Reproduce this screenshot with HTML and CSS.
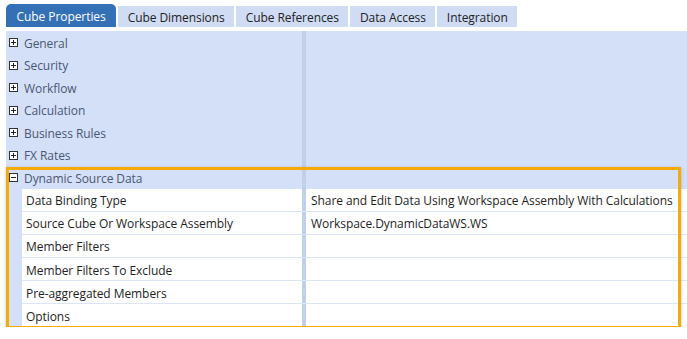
FILE: index.html
```html
<!DOCTYPE html>
<html>
<head>
<meta charset="utf-8">
<link rel="stylesheet" href="styles.css">
</head>
<body>
<div class="tabs">
  <div class="tab active">Cube Properties</div>
  <div class="tab">Cube Dimensions</div>
  <div class="tab">Cube References</div>
  <div class="tab">Data Access</div>
  <div class="tab">Integration</div>
</div>
<div class="panel">
  <div class="cat"><div class="cat-l"><svg class="ico" viewBox="0 0 9 9"><rect x="0.5" y="0.5" width="8" height="8" fill="#fff" stroke="#333"/><path d="M2 4.5h5M4.5 2v5" stroke="#222"/></svg><span>General</span></div><div class="cat-r"></div></div>
  <div class="cat"><div class="cat-l"><svg class="ico" viewBox="0 0 9 9"><rect x="0.5" y="0.5" width="8" height="8" fill="#fff" stroke="#333"/><path d="M2 4.5h5M4.5 2v5" stroke="#222"/></svg><span>Security</span></div><div class="cat-r"></div></div>
  <div class="cat"><div class="cat-l"><svg class="ico" viewBox="0 0 9 9"><rect x="0.5" y="0.5" width="8" height="8" fill="#fff" stroke="#333"/><path d="M2 4.5h5M4.5 2v5" stroke="#222"/></svg><span>Workflow</span></div><div class="cat-r"></div></div>
  <div class="cat"><div class="cat-l"><svg class="ico" viewBox="0 0 9 9"><rect x="0.5" y="0.5" width="8" height="8" fill="#fff" stroke="#333"/><path d="M2 4.5h5M4.5 2v5" stroke="#222"/></svg><span>Calculation</span></div><div class="cat-r"></div></div>
  <div class="cat"><div class="cat-l"><svg class="ico" viewBox="0 0 9 9"><rect x="0.5" y="0.5" width="8" height="8" fill="#fff" stroke="#333"/><path d="M2 4.5h5M4.5 2v5" stroke="#222"/></svg><span>Business Rules</span></div><div class="cat-r"></div></div>
  <div class="cat"><div class="cat-l"><svg class="ico" viewBox="0 0 9 9"><rect x="0.5" y="0.5" width="8" height="8" fill="#fff" stroke="#333"/><path d="M2 4.5h5M4.5 2v5" stroke="#222"/></svg><span>FX Rates</span></div><div class="cat-r"></div></div>
  <div class="group">
    <div class="cat"><div class="cat-l"><svg class="ico" viewBox="0 0 9 9"><rect x="0.5" y="0.5" width="8" height="8" fill="#fff" stroke="#333"/><path d="M2 4.5h5" stroke="#222"/></svg><span>Dynamic Source Data</span></div><div class="cat-r"></div></div>
    <div class="prop"><div class="pl">Data Binding Type</div><div class="pr">Share and Edit Data Using Workspace Assembly With Calculations</div></div>
    <div class="prop"><div class="pl">Source Cube Or Workspace Assembly</div><div class="pr">Workspace.DynamicDataWS.WS</div></div>
    <div class="prop"><div class="pl">Member Filters</div><div class="pr"></div></div>
    <div class="prop"><div class="pl">Member Filters To Exclude</div><div class="pr"></div></div>
    <div class="prop"><div class="pl">Pre-aggregated Members</div><div class="pr"></div></div>
    <div class="prop last"><div class="pl">Options</div><div class="pr"></div></div>
  </div>
</div>
</body>
</html>
```
FILE: styles.css
```css
* { box-sizing: border-box; }
html, body { margin: 0; padding: 0; background: #fff; }
body {
  font-family: "Open Sans", "Noto Sans", sans-serif;
  font-size: 12px;
  letter-spacing: -0.07px;
  color: #1e1e1e;
}
.tabs {
  display: flex;
  align-items: flex-end;
  gap: 2px;
  padding: 4px 0 0 6px;
  height: 27px;
}
.tab {
  height: 21px;
  padding: 1px 9.5px 0;
  background: #d0dcf4;
  display: flex;
  align-items: center;
  color: #222;
  white-space: nowrap;
}
.tab.active {
  height: 23px;
  padding: 1px 10.5px 0;
  background: #3370b5;
  color: #fff;
  border-radius: 5px 5px 0 0;
}
.panel {
  margin: 4px 0 0 6px;
  background: #d4e0f7;
}
.cat {
  display: grid;
  grid-template-columns: 300px 1fr;
  height: 22.5px;
}
.cat-l {
  display: flex;
  align-items: center;
  padding: 2px 0 0 3px;
  gap: 6px;
  color: #4a5774;
  border-right: 4px solid #c0cfea;
}
.ico { width: 9px; height: 9px; display: block; margin-top: -1px; }
.group { position: relative; }
.group::after {
  content: "";
  position: absolute;
  left: 0;
  top: 1px;
  right: 6px;
  bottom: -2px;
  border: 3px solid #f5aa05;
  box-shadow: 0 1px 3px rgba(0,0,0,0.25);
  pointer-events: none;
}
.prop {
  display: grid;
  grid-template-columns: 284px 1fr;
  margin-left: 16px;
  height: 23.17px;
  background: #fff;
  border-bottom: 1px solid #dbe5f5;
}
.prop.last { border-bottom: none; }
.pl {
  display: flex;
  align-items: center;
  padding: 2px 0 0 4px;
  border-right: 4px solid #c0cfea;
  white-space: nowrap;
}
.pr {
  display: flex;
  align-items: center;
  padding: 2px 0 0 5px;
  white-space: nowrap;
}
```
